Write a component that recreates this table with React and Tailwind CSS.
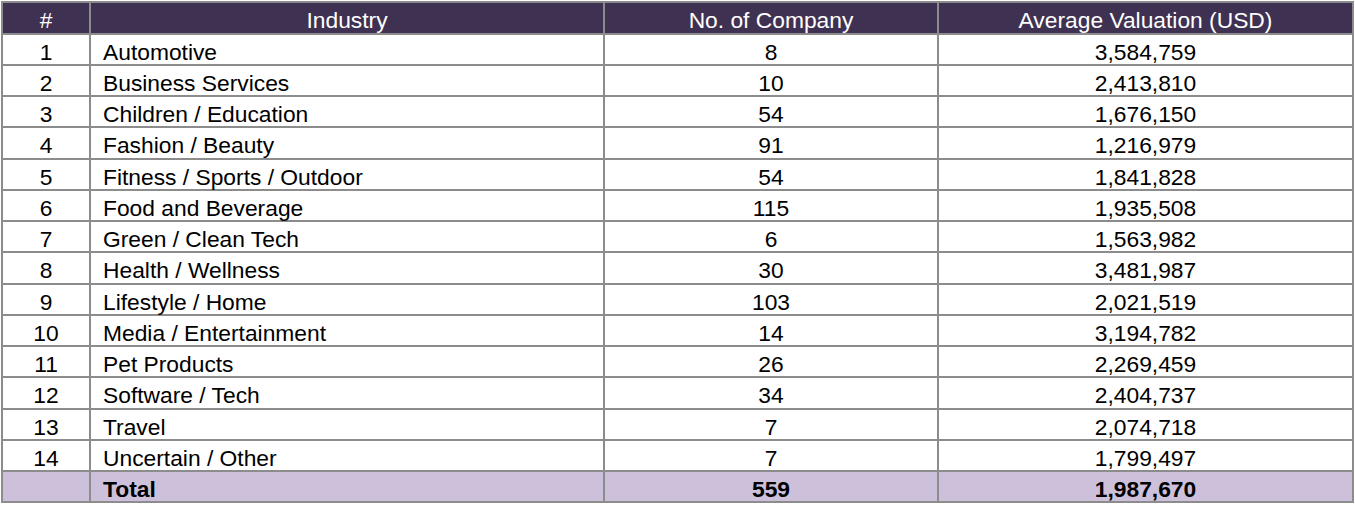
const rows = [
  [1, 'Automotive', 8, '3,584,759'],
  [2, 'Business Services', 10, '2,413,810'],
  [3, 'Children / Education', 54, '1,676,150'],
  [4, 'Fashion / Beauty', 91, '1,216,979'],
  [5, 'Fitness / Sports / Outdoor', 54, '1,841,828'],
  [6, 'Food and Beverage', 115, '1,935,508'],
  [7, 'Green / Clean Tech', 6, '1,563,982'],
  [8, 'Health / Wellness', 30, '3,481,987'],
  [9, 'Lifestyle / Home', 103, '2,021,519'],
  [10, 'Media / Entertainment', 14, '3,194,782'],
  [11, 'Pet Products', 26, '2,269,459'],
  [12, 'Software / Tech', 34, '2,404,737'],
  [13, 'Travel', 7, '2,074,718'],
  [14, 'Uncertain / Other', 7, '1,799,497'],
];

// Excel-style bottom-ish placement of text in each cell
const cell = 'border-2 border-[#8c8c8c] p-0 pt-[6px] leading-none align-top';

export default function App() {
  return (
    <div className="w-[1355px] h-[517px] bg-white pt-[1px] pl-[1px]">
      <table
        className="border-collapse table-fixed w-[1353px] text-[22.8px] text-black"
        style={{ fontFamily: '"Liberation Sans", Arial, sans-serif' }}
      >
        <colgroup>
          <col className="w-[88px]" />
          <col className="w-[514px]" />
          <col className="w-[334px]" />
          <col />
        </colgroup>
        <thead>
          <tr className="h-[31.5px] bg-[#3f3151] text-white">
            <th className={`${cell} font-normal text-center`}>#</th>
            <th className={`${cell} font-normal text-center`}>Industry</th>
            <th className={`${cell} font-normal text-center`}>No. of Company</th>
            <th className={`${cell} font-normal text-center`}>Average Valuation (USD)</th>
          </tr>
        </thead>
        <tbody>
          {rows.map(([n, name, count, val]) => (
            <tr key={n} className="h-[31.25px]">
              <td className={`${cell} text-center`}>{n}</td>
              <td className={`${cell} text-left pl-3`}>{name}</td>
              <td className={`${cell} text-center`}>{count}</td>
              <td className={`${cell} text-center`}>{val}</td>
            </tr>
          ))}
          <tr className="h-[31.25px] bg-[#ccc0da] font-bold">
            <td className={cell}></td>
            <td className={`${cell} text-left pl-3`}>Total</td>
            <td className={`${cell} text-center`}>559</td>
            <td className={`${cell} text-center`}>1,987,670</td>
          </tr>
        </tbody>
      </table>
    </div>
  );
}
